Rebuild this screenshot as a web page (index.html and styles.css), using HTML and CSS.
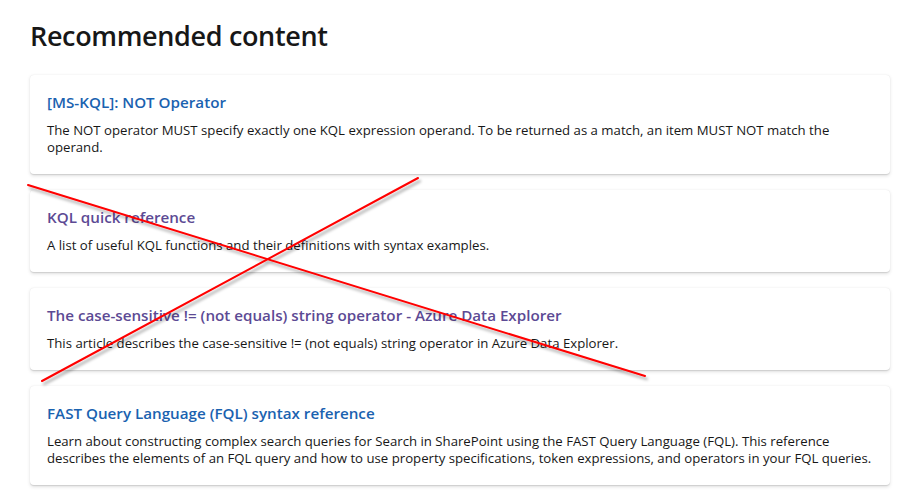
FILE: index.html
```html
<!DOCTYPE html>
<html>
<head>
<meta charset="utf-8">
<link rel="stylesheet" href="styles.css">
</head>
<body>
<main class="page">
  <h2 class="heading">Recommended content</h2>
  <ul class="list">
    <li class="card">
      <a class="title" href="#">[MS-KQL]: NOT Operator</a>
      <p class="desc">The NOT operator MUST specify exactly one KQL expression operand. To be returned as a match, an item MUST NOT match the operand.</p>
    </li>
    <li class="card">
      <a class="title visited" href="#">KQL quick reference</a>
      <p class="desc">A list of useful KQL functions and their definitions with syntax examples.</p>
    </li>
    <li class="card">
      <a class="title visited" href="#">The case-sensitive != (not equals) string operator - Azure Data Explorer</a>
      <p class="desc">This article describes the case-sensitive != (not equals) string operator in Azure Data Explorer.</p>
    </li>
    <li class="card">
      <a class="title" href="#">FAST Query Language (FQL) syntax reference</a>
      <p class="desc">Learn about constructing complex search queries for Search in SharePoint using the FAST Query Language (FQL). This reference describes the elements of an FQL query and how to use property specifications, token expressions, and operators in your FQL queries.</p>
    </li>
  </ul>
  <svg class="cross" width="916" height="503" viewBox="0 0 916 503">
    <defs>
      <filter id="sh" x="-10%" y="-10%" width="120%" height="120%">
        <feDropShadow dx="2" dy="3" stdDeviation="1.5" flood-color="#000" flood-opacity="0.35"/>
      </filter>
    </defs>
    <g filter="url(#sh)" stroke="#ff0000" stroke-width="2" stroke-linecap="round">
      <line x1="28" y1="185" x2="645" y2="376"/>
      <line x1="418" y1="178" x2="42" y2="381"/>
    </g>
  </svg>
</main>
</body>
</html>
```
FILE: styles.css
```css
html, body {
  margin: 0;
  padding: 0;
  background: #ffffff;
}
body {
  font-family: "Open Sans", "Noto Sans", sans-serif;
  color: #171717;
}
.page {
  position: relative;
  width: 916px;
  height: 503px;
  overflow: hidden;
  padding: 0 26px 0 30px;
  box-sizing: border-box;
}
.heading {
  margin: 0;
  padding-top: 17px;
  font-size: 27px;
  font-weight: 600;
  line-height: 38px;
  letter-spacing: -0.35px;
  color: #171717;
}
.list {
  list-style: none;
  margin: 20px 0 0 0;
  padding: 0;
  display: flex;
  flex-direction: column;
  gap: 16px;
}
.card {
  background: #fff;
  border-radius: 4px;
  box-shadow: 0 1.6px 3.6px rgba(0,0,0,0.12), 0 0.3px 0.9px rgba(0,0,0,0.1);
  padding: 17px 17px 18px 17px;
}
.title {
  display: block;
  font-size: 15.2px;
  line-height: 21px;
  color: #1a62b0;
  text-decoration: none;
  font-weight: 600;
}
.title.visited {
  color: #5c4a94;
}
.desc {
  margin: 9px 0 0 0;
  font-size: 13.2px;
  line-height: 17px;
  color: #171717;
}
.cross {
  position: absolute;
  left: 0;
  top: 0;
  pointer-events: none;
}
```
